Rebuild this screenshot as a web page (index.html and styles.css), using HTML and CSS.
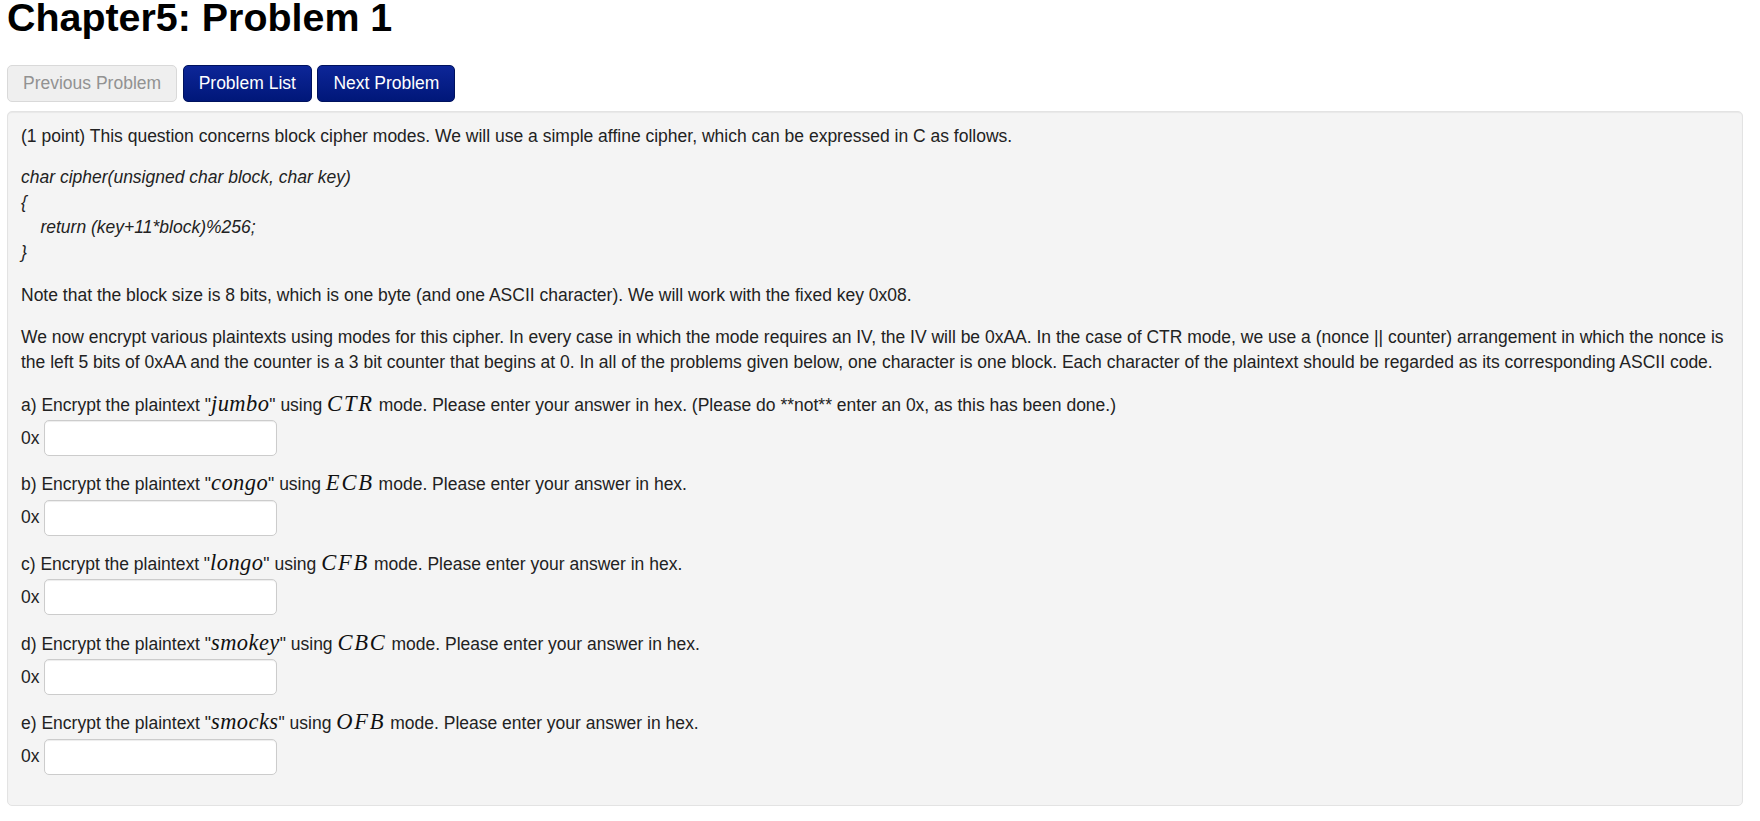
FILE: index.html
```html
<!DOCTYPE html>
<html lang="en">
<head>
<meta charset="utf-8">
<title>Chapter5: Problem 1</title>
<link rel="stylesheet" href="styles.css">
</head>
<body>
<div class="page">
  <h1 class="title">Chapter5: Problem 1</h1>
  <div class="nav">
    <span class="btn btn-disabled">Previous Problem</span>
    <a class="btn btn-primary" href="#">Problem List</a>
    <a class="btn btn-primary" href="#">Next Problem</a>
  </div>
  <div class="problem">
    <p>(1 point) This question concerns block cipher modes. We will use a simple affine cipher, which can be expressed in C as follows.</p>
    <p class="code">char cipher(unsigned char block, char key)<br>{<br>&nbsp;&nbsp;&nbsp;&nbsp;return (key+11*block)%256;<br>}</p>
    <p>Note that the block size is 8 bits, which is one byte (and one ASCII character). We will work with the fixed key 0x08.</p>
    <p>We now encrypt various plaintexts using modes for this cipher. In every case in which the mode requires an IV, the IV will be 0xAA. In the case of CTR mode, we use a (nonce || counter) arrangement in which the nonce is the left 5 bits of 0xAA and the counter is a 3 bit counter that begins at 0. In all of the problems given below, one character is one block. Each character of the plaintext should be regarded as its corresponding ASCII code.</p>

    <div class="question">
      <p class="qtext">a) Encrypt the plaintext "<span class="math">jumbo</span>" using <span class="math caps">CTR</span> mode. Please enter your answer in hex. (Please do **not** enter an 0x, as this has been done.)</p>
      <div class="answer"><span class="prefix">0x</span><input class="field" type="text" aria-label="answer a"></div>
    </div>
    <div class="question">
      <p class="qtext">b) Encrypt the plaintext "<span class="math">congo</span>" using <span class="math caps">ECB</span> mode. Please enter your answer in hex.</p>
      <div class="answer"><span class="prefix">0x</span><input class="field" type="text" aria-label="answer b"></div>
    </div>
    <div class="question">
      <p class="qtext">c) Encrypt the plaintext "<span class="math">longo</span>" using <span class="math caps">CFB</span> mode. Please enter your answer in hex.</p>
      <div class="answer"><span class="prefix">0x</span><input class="field" type="text" aria-label="answer c"></div>
    </div>
    <div class="question">
      <p class="qtext">d) Encrypt the plaintext "<span class="math">smokey</span>" using <span class="math caps">CBC</span> mode. Please enter your answer in hex.</p>
      <div class="answer"><span class="prefix">0x</span><input class="field" type="text" aria-label="answer d"></div>
    </div>
    <div class="question">
      <p class="qtext">e) Encrypt the plaintext "<span class="math">smocks</span>" using <span class="math caps">OFB</span> mode. Please enter your answer in hex.</p>
      <div class="answer"><span class="prefix">0x</span><input class="field" type="text" aria-label="answer e"></div>
    </div>
  </div>
</div>
</body>
</html>
```

FILE: styles.css
```css
html, body {
  margin: 0;
  padding: 0;
  background: #ffffff;
}

body {
  font-family: "Liberation Sans", Arial, sans-serif;
  font-size: 17.5px;
  line-height: 25px;
  color: #222222;
}

.page {
  padding: 0 17px 0 7px;
}

.title {
  margin: 1px 0 0 0;
  font-size: 39.4px;
  line-height: 32px;
  font-weight: bold;
  color: #000000;
  white-space: nowrap;
}

.nav {
  display: flex;
  gap: 5.5px;
  margin-top: 32px;
  margin-bottom: 9px;
}

.btn {
  display: inline-block;
  box-sizing: border-box;
  height: 37px;
  padding: 5px 15px;
  font-size: 17.5px;
  line-height: 25px;
  border-radius: 5px;
  text-decoration: none;
  border: 1px solid #cccccc;
  white-space: nowrap;
}

.btn-disabled {
  background: #efefef;
  color: #929292;
  border-color: #d9d9d9;
}

.btn-primary {
  background: linear-gradient(to bottom, #0d2698, #001779);
  border-color: #00125e;
  color: #ffffff;
}

.problem {
  background: #f4f4f4;
  border: 1px solid #e3e3e3;
  border-radius: 5px;
  box-shadow: inset 0 1px 1px rgba(0, 0, 0, 0.05);
  padding: 11.5px 13px 14px 13px;
}

.problem p {
  margin: 0 0 17.5px 0;
}

.problem .code {
  font-style: italic;
  margin-top: -1px;
}

.problem .qtext {
  margin: 0;
}

.math {
  font-family: "Liberation Serif", "Times New Roman", serif;
  font-style: italic;
  font-size: 22.5px;
  line-height: 1;
  letter-spacing: 0.4px;
  color: #111111;
}

.math.caps {
  letter-spacing: 1.8px;
}

.answer {
  display: flex;
  align-items: center;
  gap: 5px;
  margin: 2.5px 0 16.2px 0;
  height: 36px;
}

.prefix {
  display: inline-block;
}

.field {
  box-sizing: border-box;
  width: 233px;
  height: 36px;
  margin: 0;
  padding: 4px 7px;
  background: #ffffff;
  border: 1px solid #cccccc;
  border-radius: 5px;
  box-shadow: inset 0 1px 1px rgba(0, 0, 0, 0.075);
  font-family: "Liberation Sans", Arial, sans-serif;
  font-size: 17.5px;
}
```
